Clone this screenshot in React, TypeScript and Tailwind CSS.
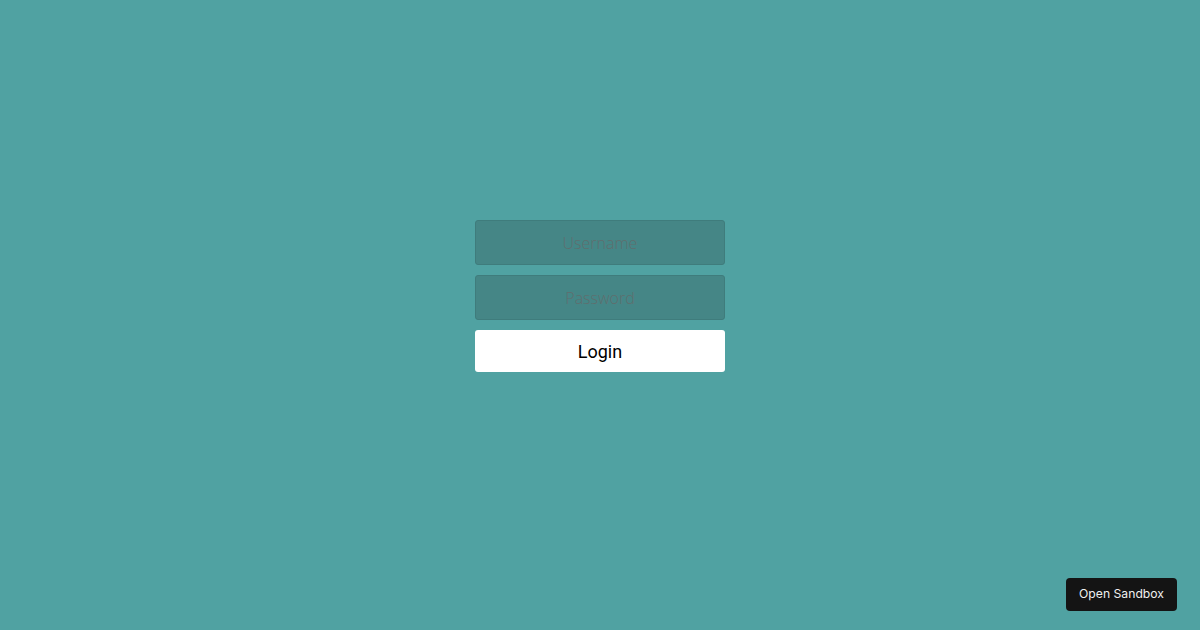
import React from 'react';

const App: React.FC = () => {
  return (
    <div className="relative w-full h-screen bg-[#50a2a2] flex items-center justify-center">
      <form className="w-[250px] flex flex-col gap-[10px] -mt-[38px]" onSubmit={(e) => e.preventDefault()}>
        <input
          type="text"
          placeholder="Username"
          className="h-[45px] w-full rounded-[3px] border border-[#3f7c7c] bg-[#458686] text-center text-[16px] font-light text-white placeholder:text-[#5f6e6e] outline-none font-['Open_Sans',sans-serif]"
        />
        <input
          type="password"
          placeholder="Password"
          className="h-[45px] w-full rounded-[3px] border border-[#3f7c7c] bg-[#458686] text-center text-[16px] font-light text-white placeholder:text-[#5f6e6e] outline-none font-['Open_Sans',sans-serif]"
        />
        <button
          type="submit"
          className="h-[42px] w-full rounded-[3px] bg-white text-[18px] text-black font-['Roboto',sans-serif]"
        >
          Login
        </button>
      </form>
      <button className="absolute right-[23px] bottom-[19px] h-[33px] w-[111px] rounded-[4px] bg-[#141414] text-[12.2px] text-[#f0f0f0] font-['Inter',sans-serif]">
        Open Sandbox
      </button>
    </div>
  );
};

export default App;
